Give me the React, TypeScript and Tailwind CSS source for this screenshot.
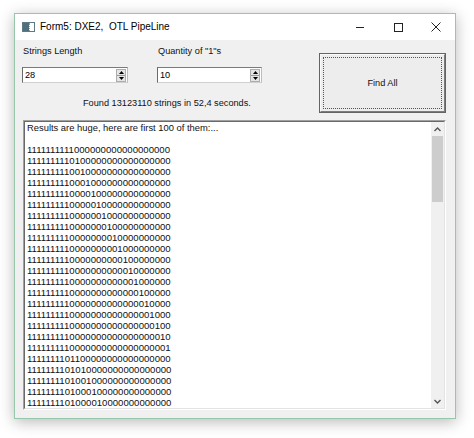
import React from "react";

const rows: string[] = [];
for (let i = 0; i < 19; i++) {
  const a = Array(19).fill("0");
  a[i] = "1";
  rows.push("111111111" + a.join(""));
}
for (let i = 0; i < 5; i++) {
  const a = Array(18).fill("0");
  a[i] = "1";
  rows.push("1111111101" + a.join(""));
}

function Spin() {
  return (
    <div className="mr-[1px] flex h-[13px] w-[10px] flex-col border border-[#adadad] bg-[#e5e5e5]">
      <div className="flex flex-1 items-center justify-center border-b border-[#9a9a9a]">
        <svg width="5" height="3" viewBox="0 0 5 3">
          <polygon points="0,3 5,3 2.5,0" fill="#000" />
        </svg>
      </div>
      <div className="flex flex-1 items-center justify-center">
        <svg width="5" height="3" viewBox="0 0 5 3">
          <polygon points="0,0 5,0 2.5,3" fill="#000" />
        </svg>
      </div>
    </div>
  );
}

function SpinEdit({ value, w }: { value: string; w: string }) {
  return (
    <div
      className={`${w} flex h-[16px] items-center border border-t-[#7a7a7a] border-l-[#6a6a6a] border-r-[#bdbdbd] border-b-[#d0d0d0] bg-white`}
    >
      <span className="flex-1 pl-[2px] text-[9.2px] leading-[11px] text-black">{value}</span>
      <Spin />
    </div>
  );
}

export default function App() {
  return (
    <div
      className="h-[438px] w-[474px] overflow-hidden bg-white pt-[13px] pl-[14px]"
      style={{ fontFamily: '"Liberation Sans", Arial, sans-serif' }}
    >
      <div className="flex h-[406px] w-[442px] flex-col border border-[#97c7ab] bg-[#f0f0f0] shadow-[0_3px_14px_rgba(0,0,0,0.28)]">
        {/* Title bar */}
        <div className="flex h-[26px] items-center bg-white">
          <div className="ml-[7px] flex h-[10px] w-[13px] border border-[#5f7a86] bg-white">
            <div className="h-full w-[6px] bg-[#4f6f7c]" />
            <div className="flex-1 border-l border-dotted border-[#88a0aa]" />
          </div>
          <span className="ml-[5px] whitespace-pre text-[10px] leading-[12px] text-black">
            {"Form5: DXE2,  OTL PipeLine"}
          </span>
          <div className="ml-auto flex h-full">
            <div className="flex w-[38px] items-center justify-center">
              <div className="h-px w-[8px] bg-[#222]" />
            </div>
            <div className="flex w-[38px] items-center justify-center">
              <div className="h-[9px] w-[9px] border border-[#222]" />
            </div>
            <div className="flex w-[38px] items-center justify-center">
              <svg width="10" height="10" viewBox="0 0 10 10">
                <path d="M0.5 0.5 L9.5 9.5 M9.5 0.5 L0.5 9.5" stroke="#222" strokeWidth="1" />
              </svg>
            </div>
          </div>
        </div>

        {/* Client area */}
        <div className="flex flex-1 flex-col text-[#111]">
          <div className="flex h-[73px]">
            <div className="pl-[7px] pt-[6px]">
              <div className="flex text-[9.2px] leading-[11px]">
                <span className="w-[135px] pl-[1px]">Strings Length</span>
                <span className="pl-[1px]">Quantity of "1"s</span>
              </div>
              <div className="mt-[10px] flex gap-[29px]">
                <SpinEdit value="28" w="w-[106px]" />
                <SpinEdit value="10" w="w-[105px]" />
              </div>
              <div className="ml-[61px] mt-[15px] text-[9.2px] leading-[11px]">
                Found 13123110 strings in 52,4 seconds.
              </div>
            </div>
            <div className="ml-auto mr-[9px] mt-[13px] h-[60px] w-[127px] border border-[#646464]">
              <div className="flex h-full w-full border border-t-[#fafafa] border-l-[#fafafa] border-r-[#7c7c7c] border-b-[#7c7c7c] bg-[#ededed] p-[2px]">
                <div className="flex flex-1 items-center justify-center border border-dotted border-[#555] text-[9.2px] leading-[11px]">
                  Find All
                </div>
              </div>
            </div>
          </div>

          {/* Memo */}
          <div className="mb-[8px] ml-[8px] mr-[9px] mt-[7px] flex h-[290px] border border-t-[#a0a0a0] border-l-[#a0a0a0] border-r-white border-b-white">
            <div className="flex flex-1 border border-t-[#696969] border-l-[#696969] border-r-[#e3e3e3] border-b-[#e3e3e3] bg-white">
              <div className="flex-1 overflow-hidden pl-[2px]">
                <div className="text-[9.4px] leading-[11px]">Results are huge, here are first 100 of them:...</div>
                <div className="h-[11px]" />
                {rows.map((r, i) => (
                  <div key={i} className="text-[9.6px] leading-[11px]">
                    {r}
                  </div>
                ))}
              </div>
              <div className="flex w-[13px] flex-col bg-[#f0f0f0]">
                <div className="flex h-[14px] items-center justify-center">
                  <svg width="7" height="5" viewBox="0 0 7 5">
                    <polyline points="0.5,4 3.5,1 6.5,4" fill="none" stroke="#555" strokeWidth="1.4" />
                  </svg>
                </div>
                <div className="mx-[1px] h-[66px] bg-[#cdcdcd]" />
                <div className="flex-1" />
                <div className="flex h-[14px] items-center justify-center">
                  <svg width="7" height="5" viewBox="0 0 7 5">
                    <polyline points="0.5,1 3.5,4 6.5,1" fill="none" stroke="#555" strokeWidth="1.4" />
                  </svg>
                </div>
              </div>
            </div>
          </div>
        </div>
      </div>
    </div>
  );
}
